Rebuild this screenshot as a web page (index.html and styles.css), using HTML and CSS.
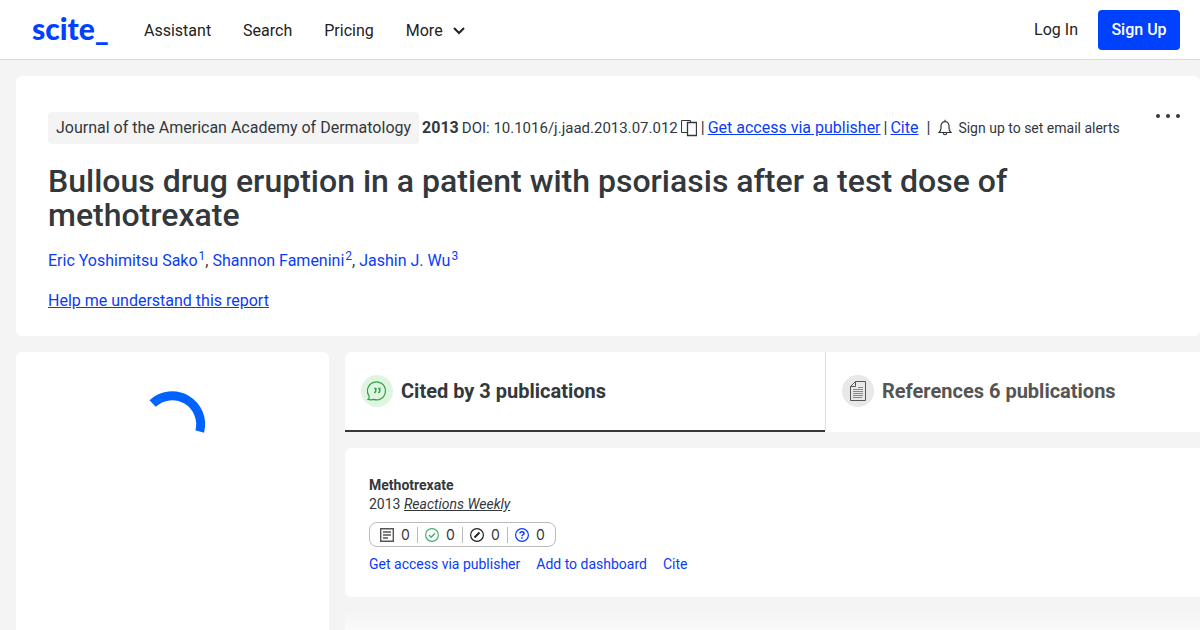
FILE: index.html
```html
<!DOCTYPE html>
<html lang="en">
<head>
    <meta charset="UTF-8">
    <meta name="viewport" content="width=device-width, initial-scale=1.0">
    <title>Bullous drug eruption in a patient with psoriasis after a test dose of methotrexate - scite</title>
    <link rel="stylesheet" href="styles.css">
</head>
<body>
    <header class="navbar">
        <a class="logo" href="#">scite_</a>
        <nav class="nav-links">
            <a href="#">Assistant</a>
            <a href="#">Search</a>
            <a href="#">Pricing</a>
            <button class="more" type="button">More
                <svg width="12" height="8" viewBox="0 0 12 8" fill="none" stroke="currentColor" stroke-width="2"><path d="M1 1l5 5 5-5"/></svg>
            </button>
        </nav>
        <div class="account">
            <a href="#">Log In</a>
            <button class="signup" type="button">Sign Up</button>
        </div>
    </header>

    <main class="page">
        <section class="card report">
            <div class="meta">
                <span class="journal">Journal of the American Academy of Dermatology</span>
                <b class="year">2013</b>
                <span class="doi">DOI: 10.1016/j.jaad.2013.07.012</span>
                <button class="copy" type="button" aria-label="Copy DOI">
                    <svg width="16" height="18" viewBox="0 0 16 18" fill="none" stroke="currentColor"><path d="M6 13.500H.5V1.500h9v2"/><path d="M6.500 3.500h9v13h-9z" stroke-width="1.300"/></svg>
                </button>
                <span>|</span>
                <a class="link" href="#">Get access via publisher</a>
                <span>|</span>
                <a class="link" href="#">Cite</a>
                <span class="bar">|</span>
                <button class="alerts" type="button">
                    <svg width="14" height="18" viewBox="0 0 14 18" fill="none" stroke="currentColor" stroke-width="1.200"><path d="M1 13.500h12c-1.400-1.200-2-2.500-2-4.500V7c0-2.500-1.700-4.400-4-4.400S3 4.500 3 7v2c0 2-.6 3.300-2 4.500zM7 .8v1.800M5.300 13.800c0 2.600 3.400 2.600 3.400 0"/></svg>
                    Sign up to set email alerts
                </button>
                <button class="dots" type="button" aria-label="More options">
                    <svg width="24" height="4" viewBox="0 0 24 4" fill="currentColor"><circle cx="2" cy="2" r="2"/><circle cx="12" cy="2" r="2"/><circle cx="22" cy="2" r="2"/></svg>
                </button>
            </div>
            <h1>Bullous drug eruption in a patient with psoriasis after a test dose of methotrexate</h1>
            <p class="authors"><a href="#">Eric Yoshimitsu Sako<sup>1</sup></a>, <a href="#">Shannon Famenini<sup>2</sup></a>, <a href="#">Jashin J. Wu<sup>3</sup></a></p>
            <a class="link" href="#">Help me understand this report</a>
        </section>

        <div class="columns">
            <aside class="card filters">
                <svg class="spinner" width="80" height="80" viewBox="0 0 80 80" fill="none" stroke="#0062ff" stroke-width="9"><path d="M19.600 19.500A28.500 28.500 0 0 1 66.700 47.500"/></svg>
            </aside>
            <div class="results">
                <div class="tabs">
                    <button class="tab active" type="button">
                        <span class="tab-icon">
                            <svg width="20" height="20" viewBox="0 0 20 20" fill="none" stroke="#2ea343" stroke-width="1.200"><path d="M1 18.400c1-.9 1.400-1.900 1.200-3.200A9 9 0 1 1 6.600 18.400c-1.700.6-3.600.6-5.600 0z"/><path d="M7.200 7.500h1.600v1.900c0 1.300-.5 2-1.500 2.500M11.200 7.500h1.600v1.900c0 1.300-.5 2-1.500 2.500" stroke-width="1.500"/></svg>
                        </span>
                        Cited by 3 publications
                    </button>
                    <button class="tab" type="button">
                        <span class="tab-icon">
                            <svg width="16" height="20" viewBox="0 0 16 20" fill="none" stroke="#555"><path d="M5.500.5h10v19H.5v-14zM5.500.5v5h-5"/><path d="M8 6.500h5M3 8.500h10M3 10.500h10M3 12.500h10M3 14.500h10M3 16.500h9" stroke="#888"/></svg>
                        </span>
                        References 6 publications
                    </button>
                </div>
                <article class="card citation">
                    <h2>Methotrexate</h2>
                    <p class="source">2013 <a href="#"><i>Reactions Weekly</i></a></p>
                    <div class="tally">
                        <span><svg width="14" height="14" viewBox="0 0 14 14" fill="none" stroke="#555" stroke-width="1.400"><path d="M.7.7h12.600v12.600H.7zM3 4h8M3 7h8M3 10h5"/></svg>0</span>
                        <span><svg width="14" height="14" viewBox="0 0 14 14" fill="none" stroke="#45b076" stroke-width="1.200"><circle cx="7" cy="7" r="6.400"/><path d="M4 7l2.200 2.200L10 5.300" stroke-width="1.500"/></svg>0</span>
                        <span><svg width="14" height="14" viewBox="0 0 14 14" fill="none" stroke="#222" stroke-width="1.200"><circle cx="7" cy="7" r="6.400"/><path d="M4.500 9.500l5-5" stroke-width="2"/></svg>0</span>
                        <span><svg width="14" height="14" viewBox="0 0 14 14" fill="none" stroke="#0a3cff" stroke-width="1.200"><circle cx="7" cy="7" r="6.400"/><path d="M5 5.500c0-2.400 4-2.300 4-.1 0 1.400-2 1.300-2 2.900M7 9.300v1.500" stroke-width="1.500"/></svg>0</span>
                    </div>
                    <div class="actions">
                        <a href="#">Get access via publisher</a>
                        <a href="#">Add to dashboard</a>
                        <a href="#">Cite</a>
                    </div>
                </article>
                <div class="placeholder"></div>
            </div>
        </div>
    </main>
</body>
</html>
```

FILE: styles.css
```css
* { box-sizing: border-box; }
body {
    margin: 0;
    height: 100vh;
    overflow: hidden;
    display: flex;
    flex-direction: column;
    background: #f4f4f4;
    color: #33383d;
    font: 16px/24px Roboto, sans-serif;
}
a { color: #0a3cf5; text-decoration: none; }
h1, h2, p { margin: 0; }
svg { display: block; flex: none; }
button {
    padding: 0;
    border: 0;
    background: none;
    color: inherit;
    font: inherit;
    cursor: pointer;
}

.navbar {
    display: flex;
    align-items: center;
    height: 60px;
    flex: none;
    padding: 0 20px 0 32px;
    background: white;
    border-bottom: 1px solid #d9d9d9;
}
.navbar a, .more { color: #222; }
.navbar .logo {
    width: 80px;
    padding-bottom: 4px;
    color: #0040ff;
    font: 900 30px/32px Lato, sans-serif;
}
.nav-links {
    display: flex;
    gap: 32px;
    margin-left: 32px;
    padding-top: 2px;
}
.more {
    display: flex;
    align-items: center;
    gap: 10px;
}
.account {
    display: flex;
    align-items: center;
    gap: 20px;
    margin-left: auto;
}
.signup {
    width: 82px;
    height: 40px;
    border-radius: 4px;
    background: #0040ff;
    color: white;
    font-weight: 500;
}

.page {
    flex: 1;
    display: flex;
    flex-direction: column;
    gap: 16px;
    padding: 16px 0 0 16px;
}
.card {
    background: white;
    border-radius: 6px;
}
.report {
    padding: 36px 20px 23px 32px;
}
.meta {
    display: flex;
    align-items: center;
    gap: 3px;
    white-space: nowrap;
}
.journal {
    padding: 4px 8px;
    border-radius: 4px;
    background: #f4f4f4;
}
.doi { font-size: 15px; }
.copy { margin-right: 1px; }
.link { text-decoration: underline; }
.bar { margin-left: 5px; }
.alerts {
    display: flex;
    align-items: center;
    gap: 6px;
    margin-left: 5px;
    font-size: 14px;
}
.dots {
    align-self: flex-start;
    margin-left: auto;
    padding: 2px 0;
}
h1 {
    max-width: 1040px;
    margin: 20px 0 17px;
    font-size: 32px;
    line-height: 34px;
    font-weight: 500;
}
.authors { margin-bottom: 16px; }
.authors sup {
    margin-left: 1px;
    font-size: 12px;
    line-height: 0;
}

.columns {
    flex: 1;
    display: grid;
    grid-template-columns: 313px 1fr;
    gap: 16px;
}
.filters {
    display: flex;
    justify-content: center;
    align-items: flex-start;
    padding-top: 32px;
    border-radius: 6px 6px 0 0;
}
.results {
    display: flex;
    flex-direction: column;
    gap: 16px;
}
.tabs {
    display: grid;
    grid-template-columns: 480px 1fr;
    background: white;
    border-radius: 6px 0 0 0;
}
.tab {
    display: flex;
    align-items: center;
    gap: 8px;
    height: 80px;
    padding: 0 16px;
    border-left: 1px solid #e0e0e0;
    border-bottom: 2px solid white;
    color: #555;
    font-size: 20px;
    font-weight: bold;
}
.tab.active {
    border-left: 0;
    border-bottom-color: #33383d;
    color: #33383d;
}
.tab-icon {
    display: flex;
    align-items: center;
    justify-content: center;
    width: 32px;
    height: 32px;
    border-radius: 50%;
    background: #e8e8e8;
}
.active .tab-icon { background: #dff5e1; }
.citation {
    padding: 28px 24px 23px;
    border-radius: 6px 0 0 6px;
    font-size: 14px;
    line-height: 19px;
}
.citation h2 {
    font-size: 14px;
    line-height: 19px;
}
.source a {
    color: inherit;
    text-decoration: underline;
}
.tally {
    display: inline-flex;
    align-items: center;
    height: 25px;
    margin: 8px 0;
    padding-right: 10px;
    border: 1px solid #bbb;
    border-radius: 8px;
    font-family: Inter, sans-serif;
}
.tally span {
    display: flex;
    align-items: center;
    gap: 7px;
    height: 16px;
    width: 45px;
    padding-left: 7px;
    border-left: 1px solid #bbb;
}
.tally span:first-child {
    width: 47px;
    padding-left: 10px;
    border: 0;
}
.tally span:last-child { width: 38px; }
.actions {
    display: flex;
    gap: 16px;
}
.placeholder {
    flex: 1;
    border-radius: 6px 0 0 0;
    background: linear-gradient(#f5f5f5, #fafafa);
}
```
